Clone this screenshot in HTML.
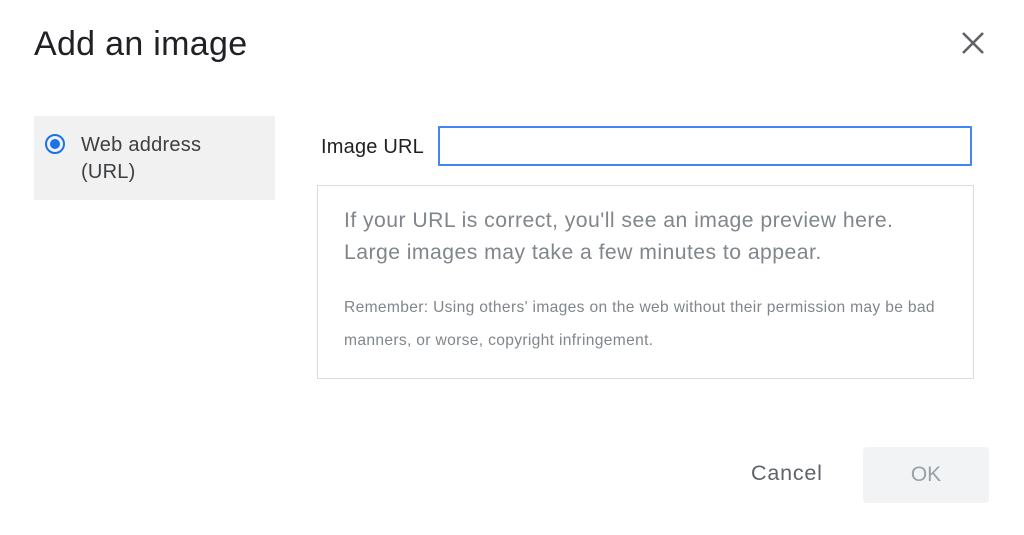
<!DOCTYPE html>
<html><head><style>
body{margin:0;width:1024px;height:535px;background:#fff;font-family:"Liberation Sans",sans-serif;position:relative;overflow:hidden}
.a{position:absolute;white-space:nowrap}
</style></head><body>
<div class="a" style="left:34px;top:25px;font-size:34px;letter-spacing:0.3px;color:#202124">Add an image</div>
<svg class="a" style="left:960px;top:30px" width="26" height="26" viewBox="0 0 26 26"><path d="M3 3L23 23M23 3L3 23" stroke="#5f6368" stroke-width="2.6"/></svg>
<div class="a" style="left:34px;top:116px;width:241px;height:84px;background:#f1f1f1"></div>
<div class="a" style="left:45px;top:134px;width:20px;height:20px;border:2px solid #1a73e8;border-radius:50%;box-sizing:border-box"></div>
<div class="a" style="left:50px;top:139px;width:10px;height:10px;background:#1a73e8;border-radius:50%"></div>
<div class="a" style="left:81px;top:132px;font-size:20px;letter-spacing:0.25px;line-height:27px;color:#3c4043">Web address<br>(URL)</div>
<div class="a" style="left:321px;top:136px;font-size:20px;letter-spacing:0.2px;color:#202124">Image URL</div>
<div class="a" style="left:438px;top:126px;width:534px;height:40px;border:2px solid #4285f4;box-sizing:border-box;border-radius:1px"></div>
<div class="a" style="left:317px;top:185px;width:657px;height:194px;border:1px solid #dadce0;box-sizing:border-box"></div>
<div class="a" style="left:344px;top:205px;font-size:21.2px;letter-spacing:0.45px;line-height:32px;color:#80868b">If your URL is correct, you'll see an image preview here.<br>Large images may take a few minutes to appear.</div>
<div class="a" style="left:344px;top:291px;font-size:15.6px;letter-spacing:0.33px;line-height:33px;color:#80868b">Remember: Using others' images on the web without their permission may be bad<br>manners, or worse, copyright infringement.</div>
<div class="a" style="left:751px;top:461px;font-size:21.5px;letter-spacing:0.8px;color:#5f6368">Cancel</div>
<div class="a" style="left:863px;top:447px;width:126px;height:56px;background:#f1f3f4;border-radius:4px;color:#9aa0a6;font-size:21px;text-align:center;line-height:56px">OK</div>
</body></html>
